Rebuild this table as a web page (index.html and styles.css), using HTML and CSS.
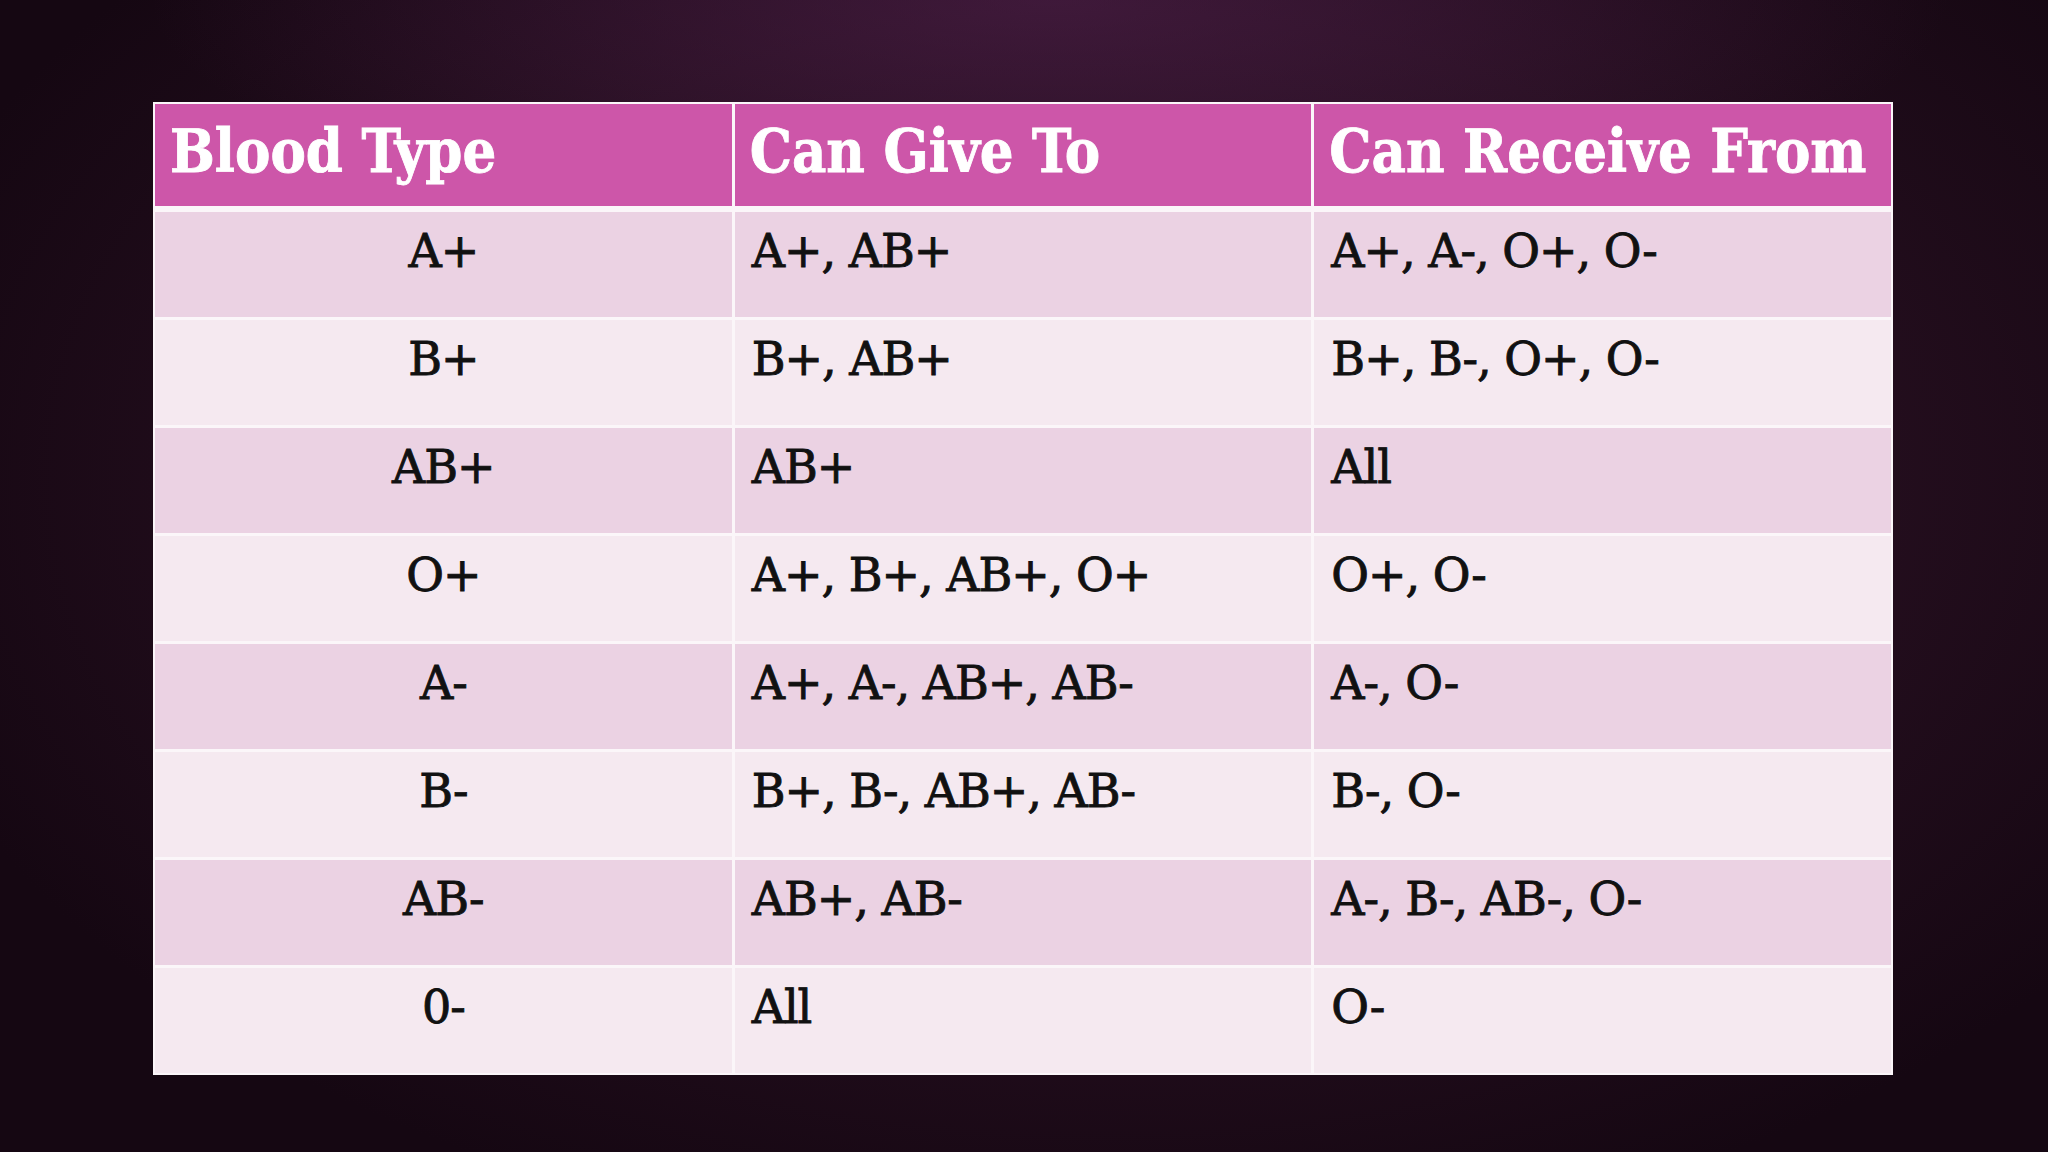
FILE: index.html
```html
<!DOCTYPE html>
<html>
<head>
<meta charset="utf-8">
<link rel="stylesheet" href="styles.css">
</head>
<body>
<div class="slide">
  <div class="grid">
    <div class="cell head">Blood Type</div>
    <div class="cell head">Can Give To</div>
    <div class="cell head">Can Receive From</div>

    <div class="cell odd center">A+</div>
    <div class="cell odd">A+, AB+</div>
    <div class="cell odd">A+, A-, O+, O-</div>

    <div class="cell even center">B+</div>
    <div class="cell even">B+, AB+</div>
    <div class="cell even">B+, B-, O+, O-</div>

    <div class="cell odd center">AB+</div>
    <div class="cell odd">AB+</div>
    <div class="cell odd">All</div>

    <div class="cell even center">O+</div>
    <div class="cell even">A+, B+, AB+, O+</div>
    <div class="cell even">O+, O-</div>

    <div class="cell odd center">A-</div>
    <div class="cell odd">A+, A-, AB+, AB-</div>
    <div class="cell odd">A-, O-</div>

    <div class="cell even center">B-</div>
    <div class="cell even">B+, B-, AB+, AB-</div>
    <div class="cell even">B-, O-</div>

    <div class="cell odd center">AB-</div>
    <div class="cell odd">AB+, AB-</div>
    <div class="cell odd">A-, B-, AB-, O-</div>

    <div class="cell even center">0-</div>
    <div class="cell even">All</div>
    <div class="cell even">O-</div>
  </div>
</div>
</body>
</html>
```

FILE: styles.css
```css
html, body {
  margin: 0;
  padding: 0;
  width: 2048px;
  height: 1152px;
  overflow: hidden;
}

body {
  background:
    radial-gradient(ellipse 900px 240px at 1050px 0px, rgba(90, 36, 86, 0.5), rgba(90, 36, 86, 0) 100%),
    radial-gradient(ellipse 1250px 780px at 1100px 480px, #33142e 0%, #240e1e 60%, #150712 100%);
}

.slide {
  padding: 102px 0 0 153px;
}

.grid {
  display: grid;
  grid-template-columns: repeat(3, 1fr);
  grid-auto-rows: 105px;
  gap: 3px;
  width: 1740px;
  box-sizing: border-box;
  background: #fbf6f9;
  border: 2px solid #fbf6f9;
}

.cell {
  box-sizing: border-box;
  font-family: "DejaVu Serif", "Liberation Serif", serif;
  font-size: 46px;
  line-height: 1;
  color: #111;
  -webkit-text-stroke: 0.9px #111;
  padding: 16px 0 0 17px;
  letter-spacing: -1px;
}

.center {
  text-align: center;
  padding-left: 0;
}

.head {
  height: 105px;
  border-bottom: 3px solid #fbf6f9;
  background: #cd56a9;
  color: #ffffff;
  -webkit-text-stroke: 0.8px #ffffff;
  font-weight: bold;
  font-size: 59px;
  font-stretch: condensed;
  padding: 18px 0 0 15px;
  letter-spacing: 0;
}

.odd {
  background: #ebd2e3;
}

.even {
  background: #f5e9f0;
}
```
